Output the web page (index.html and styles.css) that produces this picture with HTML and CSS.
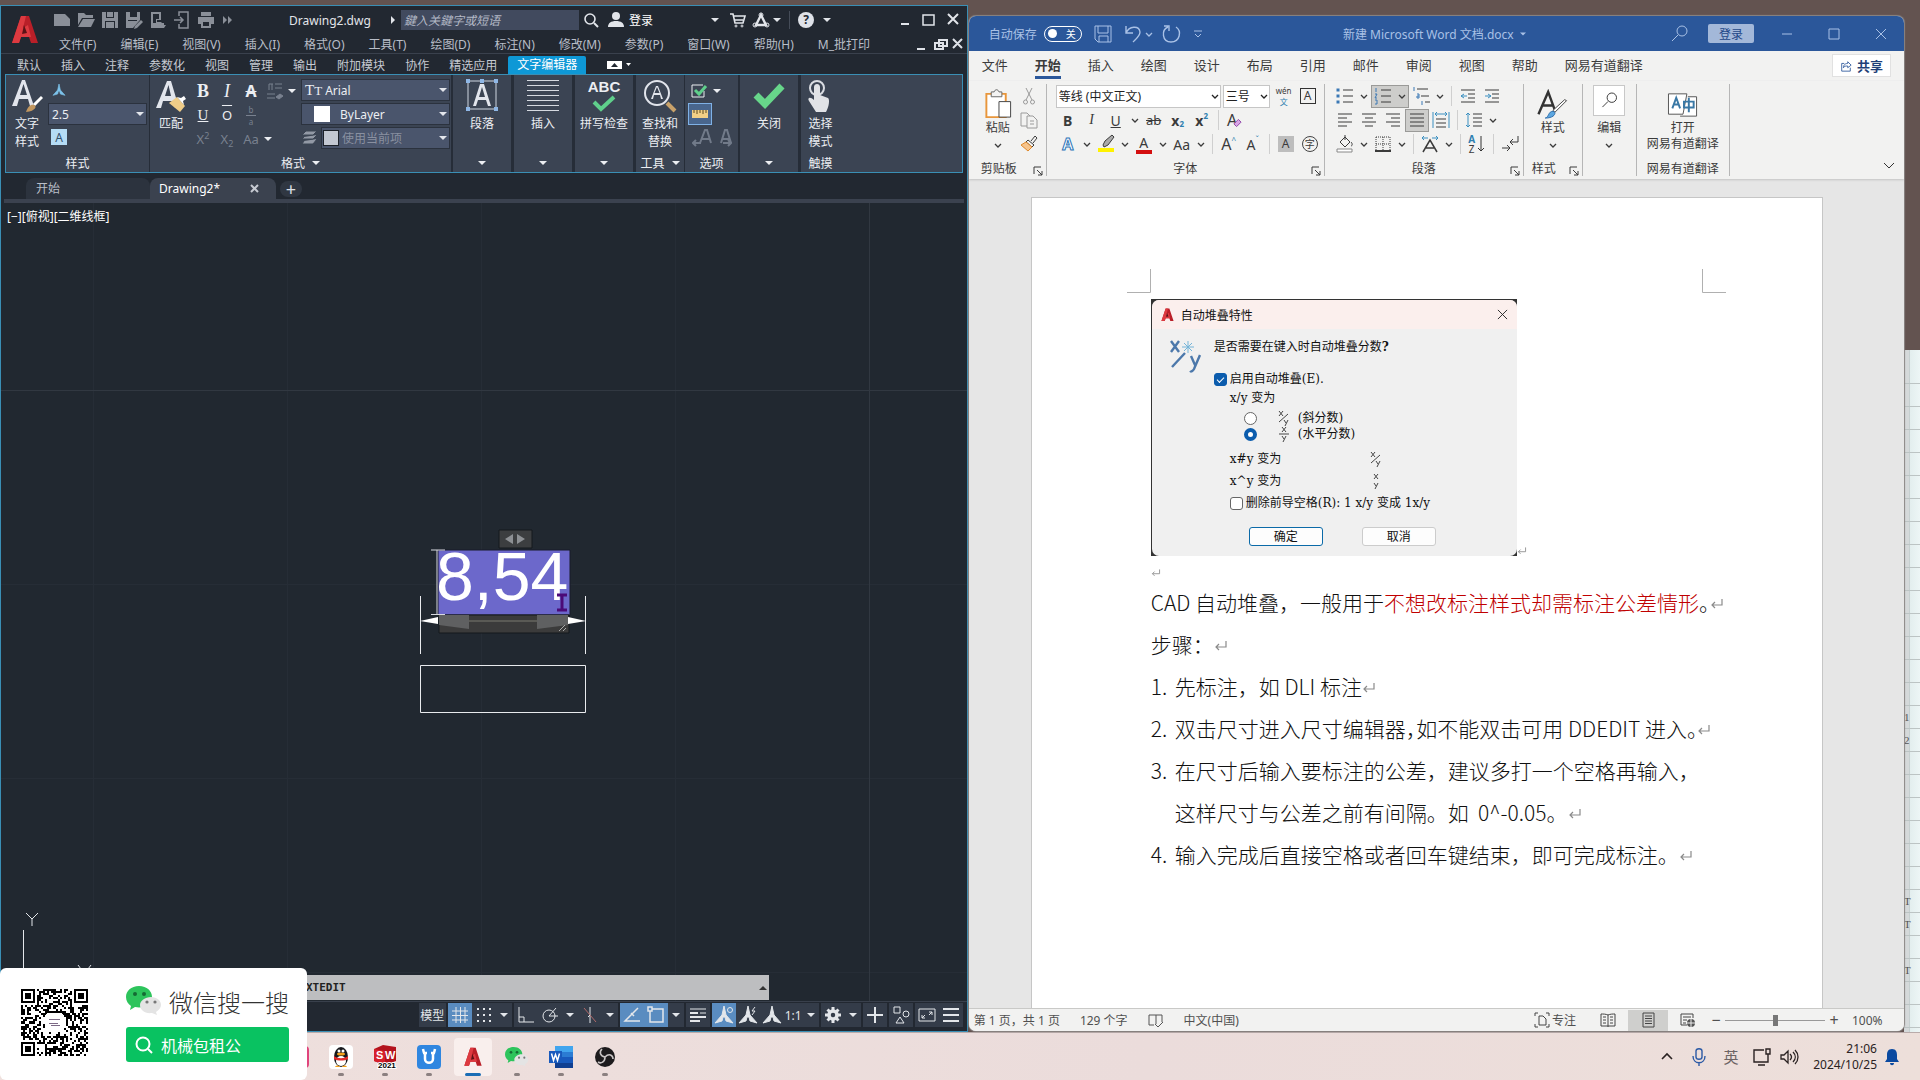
FILE: index.html
```html
<!DOCTYPE html>
<html lang="zh-CN">
<head>
  <meta charset="UTF-8" />
  <meta name="viewport" content="width=device-width, initial-scale=1.0"/>
  <title>Drawing2.dwg</title>
  <link rel="stylesheet" href="styles.css">
</head>
<body>
  <svg width="0" height="0" class="defs">
    <symbol id="acad" viewBox="0 0 26 30">
      <path d="M9 1h8l9 27h-7l-2-6H9l-2 6H0z" fill="#b91f28"/>
      <path d="M9 1h5l-3 12 5-3 3 12H9l-2 6H0z" fill="#dd3a40"/>
      <path d="M12 10l3 8-5 1z" fill="#5b1216"/>
    </symbol>
    <symbol id="chev" viewBox="0 0 8 8"><path d="M1 3l3 3 3-3" fill="none" stroke="currentColor" stroke-width="1.3"/></symbol>
    <symbol id="tri" viewBox="0 0 8 8"><path d="M0 2h8L4 6z" fill="currentColor"/></symbol>
    <symbol id="launch" viewBox="0 0 10 10"><path d="M1 8V1h7M4 4l5 5M9 5v4H5" fill="none" stroke="currentColor"/></symbol>
    <symbol id="wechat" viewBox="0 0 36 30">
      <path d="M13 0C5 0 0 5 0 11c0 4 2 7 5 9l-1 4 5-3c9 2 17-3 17-10C26 5 21 0 13 0z" fill="#2dc45c"/>
      <circle cx="9" cy="8" r="2" fill="#156b34"/><circle cx="18" cy="8" r="2" fill="#156b34"/>
      <path d="M25 11c-6 0-11 4-11 8 0 5 5 9 12 8l5 2-1-3c9-5 5-15-5-15z" fill="#e4e4e4"/>
      <circle cx="21" cy="16" r="1.6" fill="#777"/><circle cx="29" cy="16" r="1.6" fill="#777"/>
    </symbol>
    <symbol id="lines" viewBox="0 0 24 24"><path d="M5 6h14M5 10h14M5 14h14M5 18h14"/></symbol>
    <symbol id="para" viewBox="0 0 14 14"><path d="M12 2v6H2M5 5L2 8l3 3" fill="none" stroke="#8a8a8a" stroke-width="1.2"/></symbol>
    <symbol id="frac" viewBox="0 0 12 16"><path d="M1 1l4 5M5 1L1 6M1 12L10 4M6 10l2 3M10 10l-3 6" fill="none" stroke="#444"/></symbol>
    <symbol id="compass" viewBox="0 0 24 24"><path d="M12 3l2 9 7 8-7-2-1-4h-2l-1 4-7 2 7-8z" fill="currentColor" stroke="currentColor"/></symbol>
  </svg>

  <main class="desktop">
    <!-- AutoCAD -->
    <section class="cad">
      <header class="cad-head">
        <svg class="cad-logo"><use href="#acad"/></svg>
        <div class="cad-rows">
          <div class="cad-title">
            <div class="quick">
              <button aria-label="新建"><svg viewBox="0 0 24 24" class="i solid"><path d="M4 6h11l5 5v7H4z"/></svg></button>
              <button aria-label="打开"><svg viewBox="0 0 24 24" class="i solid"><path d="M4 5h6l2 2h7v3H8l-4 7zM9 11h12l-4 8H4z"/></svg></button>
              <button aria-label="保存"><svg viewBox="0 0 24 24" class="i solid"><path d="M4 4h16v16H4zM8 4v6h8V4h-1v5H9V4zM7 13v7h1v-6h8v6h1v-7z" fill-rule="evenodd"/></svg></button>
              <button aria-label="另存为"><svg viewBox="0 0 24 24" class="i solid"><path d="M4 4h14v8l-7 8H4zM8 4v5h7V4zM6 12v1h9v-1z" fill-rule="evenodd"/><path d="M19 12l2 2-6 6-3 1 1-3z"/></svg></button>
              <button aria-label="移动打开"><svg viewBox="0 0 24 24" class="i solid"><path d="M5 4h10v8h-4v8H5zM7 6v9h3v-4h3V6z" fill-rule="evenodd"/><path d="M11 14h4l1 1h2v2h2l-2 3h-7z"/></svg></button>
              <button aria-label="移动保存"><svg viewBox="0 0 24 24" class="i"><path d="M9 8V4h9v16H9v-4M4 12h9M10 9l3 3-3 3" stroke-width="1.500"/></svg></button>
              <button aria-label="打印"><svg viewBox="0 0 24 24" class="i solid"><path d="M7 4h10v4H7zM4 9h16v7h-3v4H7v-4H4zM9 14v4h6v-4z" fill-rule="evenodd"/></svg></button>
              <button aria-label="更多"><svg viewBox="0 0 24 24" class="i solid"><path d="M5 8l4 4-4 4zM10 8l4 4-4 4z"/></svg></button>
            </div>
            <h1>Drawing2.dwg</h1>
            <svg class="play" viewBox="0 0 6 8"><path d="M1 0l4 4-4 4z" fill="#e2e5ea"/></svg>
            <input class="cad-search" aria-label="搜索" placeholder="鍵入关鍵字或短语">
            <div class="cad-user">
              <svg viewBox="0 0 24 24" class="i"><circle cx="11" cy="11" r="5" stroke-width="1.6"/><path d="M15 15l4 4" stroke-width="2"/></svg>
              <svg viewBox="0 0 24 24" class="i solid"><circle cx="12" cy="8" r="4"/><path d="M4 19c0-4 3-6 8-6s8 2 8 6z"/></svg>
              <a href="#">登录</a>
            </div>
            <div class="cad-tools">
              <svg class="tri first"><use href="#tri"/></svg>
              <svg viewBox="0 0 24 24" class="i"><path d="M5 6h3l2 9h8l2-7H9M9 12h9" stroke-width="1.6"/><circle cx="11" cy="18" r="1"/><circle cx="17" cy="18" r="1"/></svg>
              <svg viewBox="0 0 24 24" class="i"><path d="M12 7L7 17h10z" stroke-width="2.4"/><circle cx="12" cy="7" r="2"/><circle cx="6" cy="17" r="2"/><circle cx="18" cy="17" r="2"/></svg>
              <svg class="tri"><use href="#tri"/></svg>
              <i class="bar"></i>
              <span class="help">?</span>
              <svg class="tri"><use href="#tri"/></svg>
            </div>
            <div class="winbtns">
              <button aria-label="最小化"><svg viewBox="0 0 24 24" class="i"><path d="M8 16h8" stroke-width="2"/></svg></button>
              <button aria-label="最大化"><svg viewBox="0 0 24 24" class="i"><path d="M6 7h11v10H6z" stroke-width="1.500"/></svg></button>
              <button aria-label="关闭"><svg viewBox="0 0 24 24" class="i"><path d="M7 6l10 10M17 6L7 16" stroke-width="2"/></svg></button>
            </div>
          </div>
          <nav class="cad-menu">
            <a href="#">文件(F)</a><a href="#">编辑(E)</a><a href="#">视图(V)</a><a href="#">插入(I)</a><a href="#">格式(O)</a><a href="#">工具(T)</a><a href="#">绘图(D)</a><a href="#">标注(N)</a><a href="#">修改(M)</a><a href="#">参数(P)</a><a href="#">窗口(W)</a><a href="#">帮助(H)</a><a href="#">M_批打印</a>
            <svg class="mdi" viewBox="0 0 54 18"><path d="M5 14h8M27 5h8v6h-8zM23 8h8v6h-8zM41 4l9 9M50 4l-9 9" fill="none" stroke="#dfe2e8" stroke-width="2"/></svg>
          </nav>
        </div>
      </header>
      <nav class="cad-tabs">
        <a href="#">默认</a><a href="#">插入</a><a href="#">注释</a><a href="#">参数化</a><a href="#">视图</a><a href="#">管理</a><a href="#">输出</a><a href="#">附加模块</a><a href="#">协作</a><a href="#">精选应用</a><a href="#" class="on">文字编辑器</a>
        <svg class="tabmin" viewBox="0 0 26 10"><path d="M0 1h15v8H0z" fill="#fff"/><path d="M4 7h7L7.500 3z" fill="#222831"/><path d="M19 3h5l-2.500 3z" fill="#fff"/></svg>
      </nav>

      <div class="cad-ribbon">
        <div class="panel p-style">
          <div class="panel-body">
            <button class="big"><svg viewBox="0 0 32 34"><path d="M1 27L11 1h3l9 26h-4l-2-7H8l-2 7zM9 16h7L12.500 5z" fill="#e2e5ec"/><path d="M31 18l-8 8" stroke="#fff" stroke-width="3"/><path d="M15 33c2-6 5-8 8-7s2 6-8 7z" fill="#c2975f"/></svg><span>文字<br>样式</span></button>
            <div class="stack">
              <svg class="anno" viewBox="0 0 24 24"><use href="#compass"/></svg>
              <span class="combo"><select aria-label="文字高度"><option>2.5</option></select></span>
              <button class="abox" aria-label="遮罩">A</button>
            </div>
          </div>
          <div class="panel-foot">样式</div>
        </div>
        <div class="panel p-format">
          <div class="panel-body">
            <button class="big match"><svg viewBox="0 0 32 34"><path d="M1 29L12 2h4l8 27h-4l-2-7H8l-2 7zM10 17h6L13.500 6z" fill="#e2e5ec"/><path d="M14 24l8-6 8 9-5 6z" fill="#f0cd88"/><path d="M22 18l4 1 3-2 2 3-3 2 1 4z" fill="#fff"/></svg><span>匹配</span></button>
            <div class="fmt">
              <button class="serif b">B</button><button class="serif it">I</button><button class="blue strike">A</button><button class="dim" aria-label="段落清除"><svg viewBox="0 0 24 24" class="i"><path d="M6 5h4M6 5v6M9 5v6M12 5h7M12 9h7M4 15h8M4 19h8" /><path d="M13 18l4-3 3 2-4 3z" fill="currentColor"/></svg></button><svg class="tri"><use href="#tri"/></svg>
              <button class="serif under">U</button><button class="over">O</button><button class="dim fracbtn"><span>b</span><span>a</span></button><i></i><i></i>
              <button class="dim">X<sup>2</sup></button><button class="dim">X<sub>2</sub></button><button class="dim">Aa</button><svg class="tri"><use href="#tri"/></svg><i></i>
            </div>
            <div class="combos">
              <span class="combo"><b class="tt">T<small>T</small></b><select aria-label="字体"><option>Arial</option></select></span>
              <span class="combo"><b class="swatch"></b><select class="ml" aria-label="颜色"><option>ByLayer</option></select></span>
              <div class="layerrow">
                <svg viewBox="0 0 18 16"><path d="M5 1h11l-4 4H1zM3 7l-2 2h11l4-4M3 11l-2 3h11l4-5" fill="#9299a5" stroke="#3b4453"/></svg>
                <span class="combo off"><b class="swatch grey"></b><select disabled aria-label="图层"><option>使用当前项</option></select></span>
              </div>
            </div>
          </div>
          <div class="panel-foot">格式<svg class="tri"><use href="#tri"/></svg></div>
        </div>
        <div class="panel p-one">
          <button class="big"><svg viewBox="0 0 32 34"><path d="M2 2h28v28H2z" fill="none" stroke="#cfd6e2"/><path d="M7 27L14 5h4l7 22h-3l-2-6h-8l-2 6zM13 18h6l-3-10z" fill="#e2e5ec"/><path d="M0 0h4v4H0zM14 0h4v4h-4zM28 0h4v4h-4zM0 28h4v4H0zM28 28h4v4h-4z" fill="#8fb7e6"/></svg><span>段落</span></button>
          <div class="panel-foot"><svg class="tri"><use href="#tri"/></svg></div>
        </div>
        <div class="panel p-one">
          <button class="big"><svg viewBox="0 0 32 34"><path d="M0 1.500h32M0 6.500h32M0 11.500h32M0 16.500h32M0 21.500h32M0 26.500h32M0 31.500h32" stroke="#d5d9e0"/></svg><span>插入</span></button>
          <div class="panel-foot"><svg class="tri"><use href="#tri"/></svg></div>
        </div>
        <div class="panel p-one">
          <button class="big"><b class="abc">ABC</b><svg class="tick" viewBox="0 0 24 18"><path d="M2 8l7 7L22 3" fill="none" stroke="#5fcf8b" stroke-width="4"/></svg><span>拼写检查</span></button>
          <div class="panel-foot"><svg class="tri"><use href="#tri"/></svg></div>
        </div>
        <div class="panel p-find">
          <button class="big"><svg viewBox="0 0 34 34"><circle cx="14" cy="14" r="12" fill="none" stroke="#e2e5ec" stroke-width="2"/><path d="M8 20l5-13h2l5 13h-2l-1-4h-6l-1 4zM11.500 14h5L14 8z" fill="#e2e5ec"/><path d="M24 24l8 8" stroke="#c9a26a" stroke-width="4"/></svg><span>查找和<br>替换</span></button>
          <div class="panel-foot">工具<svg class="tri"><use href="#tri"/></svg></div>
        </div>
        <div class="panel p-opt">
          <div class="opts">
            <div><svg viewBox="0 0 24 24" class="i"><path d="M16 6H5v12h12v-6"/><path d="M8 11l4 4 7-8" stroke="#5fcf8b" stroke-width="3"/></svg><svg class="tri"><use href="#tri"/></svg></div>
            <button class="ruler" aria-label="标尺"><svg viewBox="0 0 16 8"><path d="M0 0h16v8H0z" fill="#f1cf86"/><path d="M2 0v3M5 0v4M8 0v3M11 0v4M14 0v3" stroke="#5b4a20"/></svg></button>
            <svg class="undo" viewBox="0 0 40 18"><path d="M8 14L13 1h2l4 13M10 10h7M29 14l4-13h2l4 13M30 10h7" fill="none" stroke="currentColor" stroke-width="2"/><path d="M1 14h8M4 11l-3 3 3 3M31 14h8M36 11l3 3-3 3" fill="none" stroke="currentColor" stroke-width="2"/></svg>
          </div>
          <div class="panel-foot">选项</div>
        </div>
        <div class="panel p-one">
          <button class="big"><svg viewBox="0 0 32 34"><path d="M3 16l9 9L29 7" fill="none" stroke="#67d68a" stroke-width="7"/></svg><span>关闭</span></button>
          <div class="panel-foot"><svg class="tri"><use href="#tri"/></svg></div>
        </div>
        <div class="panel p-touch">
          <button class="big"><svg viewBox="0 0 32 34"><circle cx="12" cy="9" r="7" fill="none" stroke="#d9dce2" stroke-width="2"/><path d="M9 8c0-4 6-4 6 0v8l8 3c2 1 1 9-2 14H11L4 22c-2-3 1-5 5-1z" fill="#e0e2e6"/></svg><span>选择<br>模式</span></button>
          <div class="panel-foot">触摸</div>
        </div>
      </div>

      <div class="filetabs">
        <a href="#" class="ft">开始</a>
        <a href="#" class="ft on">Drawing2*<svg viewBox="0 0 10 10"><path d="M1 1l7 7M8 1L1 8" stroke="#c6cad2" stroke-width="2"/></svg></a>
        <button class="plus" aria-label="新图形">+</button>
      </div>

      <div class="canvas">
        <div class="viewname">[−][俯视][二维线框]</div>
        <svg class="dim-edit" viewBox="0 0 220 220">
          <path d="M99 20h33v18H99z" fill="#3c3e40" stroke="#15191d"/>
          <path d="M105 29l8-5v10zM125 29l-8-5v10z" fill="#8d9094"/>
          <path d="M38 40h132v65H38z" fill="#6c68cb" stroke="#191b2b"/>
          <path d="M39 105h130v18H39z" fill="#3b3b3b" stroke="#15191d"/>
          <path d="M39 105h30v14l-30-4zM137 105h31v10l-31 4z" fill="#5f6061"/>
          <path d="M69 111h68" stroke="#7a7a70"/>
          <path d="M159 121l6-6M163 121l3-3" stroke="#aaa"/>
          <path d="M31 40h14M37 40v64M31 104.500h14" stroke="#d8dae0" fill="none"/>
          <text x="36" y="90">8,54</text>
          <path d="M157 85h10M162 85v15M157 100h10" stroke="#4b0a78" stroke-width="3" fill="none"/>
          <path d="M20.500 86v58M185.500 86v58M20.500 155.500h165v47h-165z" stroke="#e9ebee" fill="none"/>
          <path d="M20 111l18-4v7zM186 111l-18-4v7z" fill="#fff"/>
        </svg>
        <svg class="ucs" viewBox="0 0 100 90"><path d="M25 2l6 6v7M37 2l-6 6M22.500 19v71M77 54l12 16M90 54L78 70" fill="none" stroke="#e3e6ea"/></svg>
        <div class="cmd"><input aria-label="命令行" value="XTEDIT"><svg class="tri"><use href="#tri"/></svg></div>
      </div>

      <footer class="cad-status">
        <div class="sg"><button class="model">模型</button></div>
        <div class="sg">
          <button class="sel"><svg viewBox="0 0 24 24" class="i"><path d="M8 4v16M12.500 4v16M17 4v16M4 8h16M4 12.500h16M4 17h16"/></svg></button>
          <button><svg viewBox="0 0 24 24" class="i"><path d="M5 6h14M5 12h14M5 18h14" stroke-width="2" stroke-dasharray="2 4"/></svg></button><svg class="tri"><use href="#tri"/></svg>
        </div>
        <div class="sg">
          <button><svg viewBox="0 0 24 24" class="i"><path d="M5 4v15h15M5 14h5v5"/></svg></button>
          <button><svg viewBox="0 0 24 24" class="i"><circle cx="11" cy="13" r="6"/><path d="M11 13l7-8M11 13h9"/></svg></button><svg class="tri"><use href="#tri"/></svg>
          <button><svg viewBox="0 0 24 24" class="i"><path d="M12 4v16"/><path d="M6 5l12 14" stroke="#b06a6a"/><path d="M12 12l-2 2"/></svg></button><svg class="tri"><use href="#tri"/></svg>
        </div>
        <div class="sg">
          <button class="sel"><svg viewBox="0 0 24 24" class="i"><path d="M18 5L5 18h15M11 10l3 3" stroke-width="1.500"/></svg></button>
          <button class="sel"><svg viewBox="0 0 24 24" class="i"><path d="M4 4h4v4H4zM8 6h11v13H6V8" stroke-width="1.500"/></svg></button><svg class="tri"><use href="#tri"/></svg>
        </div>
        <div class="sg"><button><svg viewBox="0 0 24 24" class="i"><path d="M4 6h16" stroke-width="1"/><path d="M4 10h8M4 14h16M4 18h10" stroke-width="2"/><path d="M14 10h6"/></svg></button></div>
        <div class="sg">
          <button class="sel"><svg viewBox="0 0 24 24" class="i"><use href="#compass"/><circle cx="18" cy="7" r="2.500"/></svg></button>
          <button><svg viewBox="0 0 24 24" class="i"><use href="#compass"/><path d="M19 4l-3 4h3l-3 4"/></svg></button>
          <button><svg viewBox="0 0 24 24" class="i"><use href="#compass"/></svg></button>
          <button class="scale">1:1</button><svg class="tri"><use href="#tri"/></svg>
        </div>
        <div class="sg"><button><svg viewBox="0 0 24 24" class="i"><circle cx="12" cy="12" r="4" stroke-width="3.500"/><path d="M12 4v3M12 17v3M4 12h3M17 12h3M6.500 6.500l2 2M15.500 15.500l2 2M17.500 6.500l-2 2M8.500 15.500l-2 2" stroke-width="3"/></svg></button><svg class="tri"><use href="#tri"/></svg></div>
        <div class="sg"><button><svg viewBox="0 0 24 24" class="i"><path d="M12 4v16M4 12h16" stroke-width="2"/></svg></button></div>
        <div class="sg"><button><svg viewBox="0 0 24 24" class="i"><path d="M5 4h6v6H5zM11 14l4 6H7z"/><circle cx="17" cy="11" r="3"/></svg></button></div>
        <div class="sg">
          <button><svg viewBox="0 0 24 24" class="i"><path d="M4 6h16v12H4zM7 15l3-3M7 12v3h3M17 9l-3 3M17 12V9h-3"/></svg></button>
          <button><svg viewBox="0 0 24 24" class="i"><path d="M4 6h16M4 12h16M4 18h16" stroke-width="2"/></svg></button>
        </div>
      </footer>
    </section>

    <!-- Word -->
    <section class="word">
      <header class="w-title">
        <div class="w-left">
          <label for="autosave">自动保存</label>
          <span class="switch"><input type="checkbox" id="autosave"><span>关</span></span>
          <button aria-label="保存"><svg viewBox="0 0 24 24" class="i"><path d="M4 4h16v16H7l-3-3zM7 4v7h10V4M8 20v-6h9v6"/></svg></button>
          <button aria-label="撤消"><svg viewBox="0 0 24 24" class="i"><path d="M5 4v7h7M5 11c3-7 13-8 14-1 0 4-4 7-7 10" stroke-width="1.400"/></svg></button>
          <svg class="chev"><use href="#chev"/></svg>
          <button aria-label="重做"><svg viewBox="0 0 24 24" class="i"><path d="M5 4h5v5M9 5c-7 3-6 15 3 15s11-11 5-15" stroke-width="1.400"/></svg></button>
          <svg class="more" viewBox="0 0 10 10"><path d="M1 2h8M2 5l3 3 3-3" fill="none" stroke="currentColor"/></svg>
        </div>
        <h2>新建 Microsoft Word 文档.docx <svg class="tri"><use href="#tri"/></svg></h2>
        <div class="w-right">
          <button aria-label="搜索"><svg viewBox="0 0 24 24" class="i"><circle cx="14" cy="9" r="5"/><path d="M10 13l-6 6"/></svg></button>
          <button class="signin">登录</button>
          <button class="wb" aria-label="最小化"><svg viewBox="0 0 24 24" class="i"><path d="M7 12h10"/></svg></button>
          <button class="wb" aria-label="还原"><svg viewBox="0 0 24 24" class="i"><path d="M7 7h10v10H7z"/></svg></button>
          <button class="wb" aria-label="关闭"><svg viewBox="0 0 24 24" class="i"><path d="M7 7l10 10M17 7L7 17"/></svg></button>
        </div>
      </header>
      <nav class="w-tabs">
        <a href="#">文件</a><a href="#" class="on">开始</a><a href="#">插入</a><a href="#">绘图</a><a href="#">设计</a><a href="#">布局</a><a href="#">引用</a><a href="#">邮件</a><a href="#">审阅</a><a href="#">视图</a><a href="#">帮助</a><a href="#">网易有道翻译</a>
        <button class="share"><svg viewBox="0 0 14 14"><path d="M5 4H2v9h10V9M4 9c0-4 3-5 5-5V2l4 4-4 3V7C7 7 5 7 4 9z" fill="none" stroke="#2b579a"/></svg>共享</button>
      </nav>

      <div class="w-ribbon">
        <div class="grp g-clip">
          <div class="g-body">
            <button class="tall"><svg viewBox="0 0 28 32"><path d="M2 5h20v24H2z" fill="#fff" stroke="#e8963c" stroke-width="2"/><path d="M7 3h3c1-3 4-3 5 0h3v5H7z" fill="#f3f3f3" stroke="#666"/><path d="M15 13h12v16H15z" fill="#fff" stroke="#444"/></svg>粘贴<svg class="chev"><use href="#chev"/></svg></button>
            <div class="col">
              <button><svg viewBox="0 0 24 24" class="i grey"><path d="M9 4l6 12M15 4L9 16"/><circle cx="8.500" cy="18" r="2"/><circle cx="15.500" cy="18" r="2"/></svg></button>
              <button><svg viewBox="0 0 24 24" class="i grey"><path d="M10 18H4V5h6l3 3M10 8h6l4 4v8H10zM13 13h4M13 16h4"/></svg></button>
              <button><svg viewBox="0 0 24 24" class="i"><path d="M14 9l4-5 2 2-4 5M11 8l6 5-2 2-6-5z"/><path d="M9 10l6 5-4 4-7-6z" fill="#f7c58d" stroke="#e08a2c"/></svg></button>
            </div>
          </div>
          <div class="g-foot">剪贴板<svg><use href="#launch"/></svg></div>
        </div>
        <div class="grp g-font">
          <div class="g-body rows">
            <div class="r">
              <span class="wsel face"><select aria-label="字体"><option>等线 (中文正文)</option></select><svg class="chev"><use href="#chev"/></svg></span>
              <span class="wsel size"><select aria-label="字号"><option>三号</option></select><svg class="chev"><use href="#chev"/></svg></span>
              <button class="wen"><small>wén</small><small>文</small></button>
              <button><span class="boxed">A</span></button>
            </div>
            <div class="r">
              <button class="b">B</button><button class="it">I</button><button class="under">U</button><svg class="chev"><use href="#chev"/></svg><button class="del">ab</button><button class="b">x<sub>2</sub></button><button class="b">x<sup>2</sup></button><i class="sep"></i><button><span class="a16">A</span><svg class="eraser" viewBox="0 0 10 10"><path d="M1 6l5-5 3 3-5 5z" fill="#d9a5e6" stroke="#8b3fa5"/></svg></button>
            </div>
            <div class="r">
              <button class="fx">A</button><svg class="chev"><use href="#chev"/></svg>
              <button><svg viewBox="0 0 24 24" class="i"><path d="M18 3l2 2-6 8-4 2-1-2 2-4z" fill="#aaa"/><path d="M4 18h16" stroke="#fff200" stroke-width="4"/></svg></button><svg class="chev"><use href="#chev"/></svg>
              <button class="red">A</button><svg class="chev"><use href="#chev"/></svg>
              <button class="aa">Aa</button><svg class="chev"><use href="#chev"/></svg><i class="sep"></i>
              <button class="a16">A<sup>^</sup></button><button>A<sup>ˇ</sup></button><i class="sep"></i>
              <button><span class="shade">A</span></button><button><span class="ring">字</span></button>
            </div>
          </div>
          <div class="g-foot">字体<svg><use href="#launch"/></svg></div>
        </div>
        <div class="grp g-para">
          <div class="g-body rows">
            <div class="r">
              <button><svg viewBox="0 0 24 24" class="i"><path d="M10 6h10M10 12h10M10 18h10"/><path d="M5 4.500v3M5 10.500v3M5 16.500v3" stroke="#3a78b5" stroke-width="3"/></svg></button><svg class="chev"><use href="#chev"/></svg>
              <span class="pressed"><button><svg viewBox="0 0 24 24" class="i"><path d="M10 6h10M10 12h10M10 18h10"/><path d="M5 4v4M4 10h2l-2 4h2M4 16h2v4H4" stroke="#3a78b5"/></svg></button><svg class="chev"><use href="#chev"/></svg></span>
              <button><svg viewBox="0 0 24 24" class="i"><path d="M8 5h11M12 12h8M16 18h5"/><path d="M5 3v4M8 10h2v4H8v-2h2M13 17v4" stroke="#3a78b5"/></svg></button><svg class="chev"><use href="#chev"/></svg><i class="sep"></i>
              <button><svg viewBox="0 0 24 24" class="i"><path d="M5 6h14M12 10h7M12 14h7M5 18h14"/><path d="M5 12h6M8 10l-3 2 3 2" stroke="#3a8fc0"/></svg></button>
              <button><svg viewBox="0 0 24 24" class="i"><path d="M5 6h14M12 10h7M12 14h7M5 18h14"/><path d="M5 12h6M8 10l3 2-3 2" stroke="#3a8fc0"/></svg></button>
            </div>
            <div class="r">
              <button><svg viewBox="0 0 24 24" class="i"><path d="M5 6h14M5 10h9M5 14h14M5 18h9"/></svg></button>
              <button><svg viewBox="0 0 24 24" class="i"><path d="M5 6h14M8 10h8M5 14h14M8 18h8"/></svg></button>
              <button><svg viewBox="0 0 24 24" class="i"><path d="M5 6h14M10 10h9M5 14h14M10 18h9"/></svg></button>
              <span class="pressed"><button><svg class="i"><use href="#lines"/></svg></button></span>
              <button><svg viewBox="0 0 24 24" class="i"><path d="M7 11h10M7 15h10M7 19h10"/><path d="M4 4v16M20 4v16M6 6h12M8 4L6 6l2 2M16 4l2 2-2 2" stroke="#3a8fc0"/></svg></button><i class="sep"></i>
              <button><svg viewBox="0 0 24 24" class="i"><path d="M11 6h9M11 10h9M11 14h9M11 18h9"/><path d="M6 5v14M4 7l2-2 2 2M4 17l2 2 2-2" stroke="#3a8fc0"/></svg></button><svg class="chev"><use href="#chev"/></svg>
            </div>
            <div class="r">
              <button><svg viewBox="0 0 24 24" class="i"><path d="M12 5l5 5-5 5-5-5zM12 3v5M18 10c2 2 1 4 0 4"/><path d="M4 17h15v3H4z" fill="#fff" stroke="#888"/></svg></button><svg class="chev"><use href="#chev"/></svg>
              <button><svg viewBox="0 0 24 24" class="i"><path d="M5 5h14v13M5 5v13M12 5v13M5 12h14" stroke-dasharray="1 1"/><path d="M4 19h16" stroke-width="2"/></svg></button><svg class="chev"><use href="#chev"/></svg><i class="sep"></i>
              <button><svg viewBox="0 0 24 24" class="i"><path d="M5 20L12 8l7 12M8 16h8" stroke-width="1.500"/><path d="M4 6h6M6 4L4 6l2 2M14 6h6M18 4l2 2-2 2" stroke="#3a8fc0"/></svg></button><svg class="chev"><use href="#chev"/></svg><i class="sep"></i>
              <button class="az"><span>A</span><span>Z</span><svg viewBox="0 0 8 18"><path d="M4 1v15M1 13l3 3 3-3" fill="none" stroke="#333"/></svg></button><i class="sep"></i>
              <button><svg viewBox="0 0 24 24" class="i"><path d="M20 4v6h-7M15 7l-3 3 3 3M4 16h8M9 13l3 3-3 3"/></svg></button>
            </div>
          </div>
          <div class="g-foot">段落<svg><use href="#launch"/></svg></div>
        </div>
        <div class="grp g-style">
          <div class="g-body">
            <button class="tall"><svg viewBox="0 0 32 32"><path d="M1 26L11 3l7 19M5 17h11" fill="none" stroke="#333" stroke-width="2.500"/><path d="M30 12L18 24l-2-2 12-11z" fill="#fff" stroke="#444"/><path d="M8 30c4-1 3-7 8-7 4 1 2 7-8 7z" fill="#5da7e0" stroke="#2b6cab"/></svg>样式<svg class="chev"><use href="#chev"/></svg></button>
          </div>
          <div class="g-foot">样式<svg><use href="#launch"/></svg></div>
        </div>
        <div class="grp g-edit">
          <div class="g-body"><button class="tall"><svg class="findbox" viewBox="0 0 32 30"><circle cx="19" cy="12" r="5" fill="none" stroke="#333"/><path d="M15 16l-6 6" stroke="#333"/></svg>编辑<svg class="chev"><use href="#chev"/></svg></button></div>
          <div class="g-foot"></div>
        </div>
        <div class="grp g-youdao">
          <div class="g-body"><button class="tall"><svg viewBox="0 0 32 32"><path d="M1 5h19l-4 21H1zM21 8h9v20H13" fill="#fff" stroke="#555"/><path d="M5 20L9 9l4 11M6 16h6M17 13h10v6H17zM22 9v15" fill="none" stroke="#3a78a5" stroke-width="2"/></svg>打开<span>网易有道翻译</span></button></div>
          <div class="g-foot">网易有道翻译</div>
        </div>
        <button class="collapse" aria-label="折叠功能区"><svg viewBox="0 0 12 8"><path d="M1 1l5 5 5-5" fill="none" stroke="#333"/></svg></button>
      </div>

      <div class="w-doc">
        <article class="page">
          <svg class="crop tl" viewBox="0 0 24 24"><path d="M23.500 0v23.500H0"/></svg>
          <svg class="crop tr" viewBox="0 0 24 24"><path d="M.5 0v23.500H24"/></svg>
          <div class="figure">
            <div class="shot">
              <div class="dlg">
                <div class="dlg-title"><svg><use href="#acad"/></svg>自动堆叠特性<svg class="x" viewBox="0 0 12 12"><path d="M1 1l10 10M11 1L1 11" stroke="#222"/></svg></div>
                <div class="dlg-body">
                  <svg class="xy" viewBox="0 0 32 34"><path d="M2 2l8 11M10 2L2 13M3 28L16 14M22 17l4 9M31 16l-6 14c-1 2-3 3-4 2" fill="none" stroke="#4c78ab" stroke-width="2.400"/><path d="M19 2v12M13 8h12M15 4l8 8M23 4l-8 8" stroke="#74b4d8"/></svg>
                  <p class="ask">是否需要在键入时自动堆叠分数<b>?</b></p>
                  <div class="dr d1"><input type="checkbox" id="stack" checked><label for="stack">启用自动堆叠(E).</label></div>
                  <div class="dr d2">x/y 变为</div>
                  <div class="dr d3"><input type="radio" name="f" id="f1"><svg class="frac"><use href="#frac"/></svg><label for="f1">(斜分数)</label></div>
                  <div class="dr d3"><input type="radio" name="f" id="f2" checked><svg class="frac" viewBox="0 0 12 16"><path d="M4 1l4 5M8 1L4 6M1 8h10M4 10l2 3M8 10l-3 6" fill="none" stroke="#444"/></svg><label for="f2">(水平分数)</label></div>
                  <div class="dr d4"><span>x#y 变为</span><svg class="frac"><use href="#frac"/></svg></div>
                  <div class="dr d4"><span>x^y 变为</span><svg class="frac" viewBox="0 0 12 16"><path d="M4 1l4 5M8 1L4 6M4 10l2 3M8 10l-3 6" fill="none" stroke="#444"/></svg></div>
                  <div class="dr d5"><input type="checkbox" id="lead"><label for="lead">删除前导空格(R): 1 x/y 变成 1x/y</label></div>
                  <div class="btns"><button class="ok">确定</button><button>取消</button></div>
                </div>
              </div>
            </div>
            <svg class="pm"><use href="#para"/></svg>
          </div>
          <p class="blank"><svg class="pm"><use href="#para"/></svg></p>
          <p>CAD 自动堆叠，一般用于<span class="hot">不想改标注样式却需标注公差情形</span><span class="half">。</span><svg class="pm"><use href="#para"/></svg></p>
          <p>步骤：<svg class="pm"><use href="#para"/></svg></p>
          <ol>
            <li><b>1.</b><span>先标注，如 DLI 标注<svg class="pm"><use href="#para"/></svg></span></li>
            <li><b>2.</b><span>双击尺寸进入尺寸编辑器<span class="half">，</span>如不能双击可用 DDEDIT 进入<span class="half">。</span><svg class="pm"><use href="#para"/></svg></span></li>
            <li><b>3.</b><span>在尺寸后输入要标注的公差，建议多打一个空格再输入，<br>这样尺寸与公差之前有间隔。如 &nbsp;0^-0.05。<svg class="pm"><use href="#para"/></svg></span></li>
            <li><b>4.</b><span>输入完成后直接空格或者回车键结束，即可完成标注。<svg class="pm"><use href="#para"/></svg></span></li>
          </ol>
        </article>
      </div>

      <footer class="w-status">
        <span>第 1 页，共 1 页</span>
        <span>129 个字</span>
        <svg class="book" viewBox="0 0 16 14"><path d="M8 2v9M8 2H1v10h5M8 2h6v7M7 11l3 3 5-5" fill="none" stroke="#555"/></svg>
        <span>中文(中国)</span>
        <div class="w-views">
          <button class="focus"><svg viewBox="0 0 16 16"><path d="M4 1H1v3M12 1h3v3M4 15H1v-3M12 15h3v-3M5 4h4l3 3v6H5z" fill="none" stroke="#444"/></svg>专注</button>
          <button class="view"><svg viewBox="0 0 16 16"><path d="M8 3v12M8 3C6 2 3 2 1 2v12h7M8 3c2-1 5-1 7-1v12H8M3 5h3M3 8h3M3 11h3M10 5h3M10 8h3M10 11h3" fill="none" stroke="#444"/></svg></button>
          <button class="view on"><svg viewBox="0 0 16 16"><path d="M3 1h11v14H3zM5 4h7M5 6.500h7M5 9h7M5 11.500h7" fill="none" stroke="#444"/></svg></button>
          <button class="view"><svg viewBox="0 0 16 16"><path d="M7 13H1V2h12v4M3 5h8M3 8h4M3 11h3" fill="none" stroke="#444"/><circle cx="11" cy="11" r="4" fill="#555"/><path d="M7 11h8M11 7v8" stroke="#eee"/></svg></button>
          <button class="zb">−</button>
          <input type="range" min="0" max="100" value="50" aria-label="缩放">
          <button class="zb">+</button>
          <span class="pct">100%</span>
        </div>
      </footer>
    </section>
    <aside class="sheet"><ol id="sheetRows"></ol></aside>
  </main>

  <footer class="taskbar">
    <div class="apps">
      <button class="app peek" aria-label="应用"></button>
      <button class="app run" aria-label="QQ"><svg viewBox="0 0 24 24"><rect width="24" height="24" rx="4" fill="#fff"/><ellipse cx="12" cy="12" rx="7" ry="10" fill="#17181c"/><ellipse cx="12" cy="16" rx="5" ry="5" fill="#fff"/><path d="M5 11c4 3 10 3 14 0v3c-4 2-10 2-14 0z" fill="#e32b2b"/><ellipse cx="12" cy="9" rx="4" ry="1.500" fill="#f3a11b"/><circle cx="10" cy="6" r="1.500" fill="#fff"/><circle cx="14" cy="6" r="1.500" fill="#fff"/><path d="M6 22c1-2 4-2 5 0zM13 22c1-2 4-2 5 0z" fill="#f3a11b"/></svg></button>
      <button class="app run" aria-label="SolidWorks"><svg viewBox="0 0 24 24"><path d="M1 4l9-4 13 2v14l-11 4-11-4z" fill="#b3121d"/><path d="M1 4l11 2v14L1 16z" fill="#d6202b"/><text x="3" y="14" class="sw">S</text><text x="12" y="14" class="sw">W</text><text x="5" y="23" class="yr">2021</text></svg></button>
      <button class="app run" aria-label="U"><svg viewBox="0 0 24 24"><rect width="24" height="24" rx="4" fill="#2f86e0"/><path d="M8 8v6c0 5 8 5 8 0V8M6 8h4M14 8h4M7 8L6 4M17 8l1-4" fill="none" stroke="#fff" stroke-width="2.500"/></svg></button>
      <button class="app run active" aria-label="AutoCAD"><svg class="sm"><use href="#acad"/></svg></button>
      <button class="app run" aria-label="微信"><svg><use href="#wechat"/></svg></button>
      <button class="app run" aria-label="Word"><svg viewBox="0 0 24 24"><path d="M6 1h18v22H6z" fill="#2b7cd3"/><path d="M6 1h18v6H6z" fill="#41a5ee"/><path d="M6 12h18v6H6z" fill="#185abd"/><path d="M6 18h18v5H6z" fill="#103f91"/><path d="M0 6h13v12H0z" fill="#185abd"/><path d="M2.500 8.500l2 7 2-6 2 6 2-7" fill="none" stroke="#fff" stroke-width="1.500"/></svg></button>
      <button class="app run" aria-label="OBS"><svg viewBox="0 0 24 24"><circle cx="12" cy="12" r="10" fill="#1d1b1d"/><path d="M12 12c-5-1-6-5-3-8M12 12c4-4 8-2 8 2M12 12c0 5-4 7-7 5" fill="none" stroke="#c9c5c5" stroke-width="1.600"/></svg></button>
    </div>
    <div class="tray">
      <button class="tr"><svg viewBox="0 0 24 24" class="i"><path d="M7 14l5-5 5 5" stroke-width="1.600"/></svg></button>
      <button class="tr mic"><svg viewBox="0 0 24 24" class="i"><path d="M9 6c0-3 6-3 6 0v6c0 3-6 3-6 0zM6 11c0 9 12 9 12 0M12 17v4" stroke-width="1.400"/></svg></button>
      <button class="tr ime">英</button>
      <button class="tr"><svg viewBox="0 0 24 24" class="i"><path d="M14 5H4v12h14v-4M8 20h7M16 4h4v5h-4zM18 9v6" stroke-width="1.400"/></svg></button>
      <button class="tr"><svg viewBox="0 0 24 24" class="i"><path d="M4 10h3l4-4v12l-4-4H4zM13 9c2 2 2 4 0 6M16 7c3 3 3 7 0 10M18 5c4 4 4 10 0 14" stroke-width="1.300"/></svg></button>
      <div class="clock"><time>21:06</time><time>2024/10/25</time></div>
      <svg class="bell" viewBox="0 0 16 18"><path d="M8 1c4 0 5 3 5 6v4l2 3H1l2-3V7c0-3 1-6 5-6zM6 15h4c0 3-4 3-4 0z" fill="#0b4aa0"/></svg>
    </div>
  </footer>

  <div class="wx-card">
    <svg id="qr" viewBox="0 0 33 33" shape-rendering="crispEdges"></svg>
    <div class="wx-side">
      <div class="wx-name"><svg><use href="#wechat"/></svg>微信搜一搜</div>
      <button class="wx-search"><svg viewBox="0 0 18 18"><circle cx="8" cy="8" r="6.500"/><path d="M13 13l4 4"/></svg>机械包租公</button>
    </div>
  </div>

  <script>
    // rows of the sheet that sticks out behind Word
    const labels = { 15: '1', 16: '2', 23: 'T', 24: 'T', 26: 'T' };
    const rows = document.getElementById('sheetRows');
    for (let i = 0; i < 29; i++) {
      const li = document.createElement('li');
      li.textContent = labels[i] || '';
      rows.appendChild(li);
    }

    // QR code: three finders, the rest filled from a small generator
    const n = 33;
    let seed = 20241025;
    function bit() {
      seed = (seed * 1103515245 + 12345) % 2147483648;
      return seed > 1073741824;
    }
    function finder(x, y, fx, fy) {
      const dx = x - fx, dy = y - fy;
      if (dx < -1 || dy < -1 || dx > 7 || dy > 7) return null;
      if (dx < 0 || dy < 0 || dx > 6 || dy > 6) return false;
      const r = Math.max(Math.abs(dx - 3), Math.abs(dy - 3));
      return r !== 2;
    }
    let d = '';
    for (let y = 0; y < n; y++) {
      for (let x = 0; x < n; x++) {
        let on = bit();
        [[0, 0], [n - 7, 0], [0, n - 7]].forEach(f => {
          const v = finder(x, y, f[0], f[1]);
          if (v !== null) on = v;
        });
        if (on) d += `M${x} ${y}h1v1h-1z`;
      }
    }
    document.getElementById('qr').innerHTML =
      `<path d="${d}"/><rect x="12" y="12" width="9" height="9" rx="1" fill="#fff"/>` +
      '<path d="M14 15h5M14 17h4M15 18h4" stroke="#7d6a86" stroke-width=".6"/>';
  </script>
</body>
</html>
```

FILE: styles.css
```css
* { box-sizing: border-box; }
body {
  margin: 0;
  font-family: "Noto Sans", "Noto Sans CJK SC", sans-serif;
  font-size: 12px;
  background: #635350;
  display: flex;
  flex-direction: column;
  height: 100vh;
  overflow: hidden;
}
button, input, select {
  font: inherit;
  color: inherit;
  background: none;
  border: none;
  padding: 0;
  margin: 0;
}
button { display: flex; align-items: center; justify-content: center; white-space: nowrap; }
a { color: inherit; text-decoration: none; white-space: nowrap; }
h1, h2 { font-weight: normal; }
h1, h2, p, ol { margin: 0; padding: 0; }
svg { flex: none; display: block; }
.defs { position: absolute; }
.i { width: 24px; height: 24px; fill: none; stroke: currentColor; }
.solid { fill: currentColor; stroke: none; }
.tri, .chev { width: 8px; height: 8px; }
.b { font-weight: bold; }
.it { font-style: italic; font-family: "Liberation Serif", serif; }
.under { text-decoration: underline; }
.desktop { flex: 1; display: flex; min-height: 0; position: relative; }

/* AutoCAD window */
.cad {
  width: 50.4%;
  margin-top: 5px;
  background: #222831;
  border: 1px solid #3a8fb5;
  color: #b9bec8;
  display: flex;
  flex-direction: column;
}
.cad-head { display: flex; border-bottom: 1px solid #3a414d; }
.cad-logo { width: 26px; height: 30px; margin: 9px 8px 0 11px; }
.cad-rows { flex: 1; }
.cad-title { display: flex; align-items: center; height: 28px; color: #e2e5ea; }
.quick { display: flex; color: #8a8f98; margin-left: 4px; }
h1 { font-size: 12px; margin-left: 47px; width: 82px; white-space: nowrap; }
.play { width: 6px; height: 8px; margin: 0 5px 0 19px; }
.cad-search {
  width: 178px;
  height: 20px;
  background: #414a5e;
  padding: 0 3px;
  font-style: italic;
}
.cad-search::placeholder { color: #b3b9c6; }
.cad-user { display: flex; align-items: center; gap: 1px; }
.cad-user a { color: #fff; }
.cad-tools { display: flex; align-items: center; margin-left: 58px; }
.cad-tools .first { margin-right: 6px; }
.bar { width: 1px; height: 18px; background: #454c58; margin: 0 8px; }
.help {
  width: 16px;
  height: 16px;
  line-height: 16px;
  margin-right: 9px;
  border-radius: 8px;
  text-align: center;
  background: #dfe2e8;
  color: #222831;
  font-weight: bold;
}
.winbtns { display: flex; margin-left: auto; padding-right: 2px; }
.cad-menu { display: flex; align-items: center; gap: 24px; height: 19px; padding-left: 13px; }
.mdi { width: 54px; height: 18px; margin-left: auto; margin-right: 1px; }
.cad-tabs { display: flex; align-items: center; gap: 20px; height: 20px; padding: 2px 0 0 16px; color: #c6cad2; }
.cad-tabs .on {
  background: #0e98d6;
  color: #fff;
  height: 18px;
  line-height: 18px;
  padding: 0 9px;
  margin: 0 -9px;
  border-radius: 2px 2px 0 0;
}
.tabmin { width: 26px; height: 10px; margin-left: 10px; }
.cad-ribbon {
  display: flex;
  height: 99px;
  margin: 0 4px;
  border: 1px solid #3a8fb5;
  background: #3b4453;
  color: #eceef2;
}
.panel { display: flex; flex-direction: column; border-right: 1px solid #262d38; padding-top: 4px; }
.panel-body { flex: 1; display: flex; }
.panel-foot { display: flex; align-items: center; justify-content: center; gap: 7px; height: 18px; margin-top: auto; }
.p-style { width: 144px; }
.p-format { width: 303px; border-right-width: 2px; }
.p-one { width: 61px; border-right-width: 3px; }
.p-find { width: 49px; }
.p-opt { width: 55px; border-right-width: 2px; }
.p-touch { flex: 1; align-items: flex-start; border: none; }
.p-touch .big, .p-touch .panel-foot { width: 39px; }
.big { flex-direction: column; justify-content: flex-start; width: 100%; line-height: 18px; }
.big svg { width: 32px; height: 34px; margin-bottom: 2px; }
.p-find .big svg { width: 34px; }
.p-style .big, .p-format .big { width: 42px; }
.abc { font: bold 15px/15px "Liberation Sans", sans-serif; }
.big .tick { width: 24px; height: 18px; margin-bottom: 3px; }
.stack { display: flex; flex-direction: column; align-items: flex-start; gap: 3px; }
.anno { color: #7cc2ea; width: 16px; height: 16px; margin: 3px 3px 2px; }
.combo { display: flex; align-items: center; position: relative; width: 149px; height: 22px; background: #4a556c; border: 1px solid #2b323e; }
.stack .combo { width: 99px; }
.combo select { appearance: none; flex: 1; height: 20px; padding-left: 3px; }
.combo::after {
  content: "";
  position: absolute;
  right: 2px;
  top: 8px;
  border: 4px solid transparent;
  border-top-color: #e3e6ec;
  border-bottom: none;
}
.combo .ml { padding-left: 10px; }
.combo.off { color: #8990a0; width: 129px; }
.combo select:disabled { opacity: 1; }
.tt { font: 15px "Liberation Serif", serif; padding-left: 3px; }
.tt small { font-size: 13px; }
.swatch { width: 16px; height: 16px; background: #fff; margin-left: 12px; }
.swatch.grey { background: #c3c8d2; border: 1px solid #1d222a; margin-left: 1px; }
.abox { width: 16px; height: 16px; background: #b5dcf5; color: #33506b; margin: 1px 0 0 3px; }
.fmt { display: grid; grid-template-columns: repeat(4, 24px) 13px; grid-auto-rows: 24px; align-items: center; width: 109px; padding-right: 1px; }
.fmt button { height: 24px; margin-left: -2px; }
.serif { font: 18px "Liberation Serif", serif; }
.serif.b { font-weight: bold; }
.serif.it { font-style: italic; }
.serif.under { font-size: 15px; }
.strike { text-decoration: line-through; font-weight: bold; font-size: 16px; }
.over { text-decoration: overline; font-size: 13px; }
.dim { color: #79818f; font-size: 13px; }
.dim sup, .dim sub { font-size: 9px; line-height: 9px; }
.dim sup { margin-bottom: 8px; }
.dim sub { margin-top: 8px; }
.fracbtn { flex-direction: column; font-size: 8px; line-height: 11px; }
.fracbtn span + span { border-top: 1px solid; width: 10px; }
.combos { display: flex; flex-direction: column; gap: 2px; }
.layerrow { display: flex; align-items: center; gap: 2px; }
.layerrow svg { width: 18px; height: 16px; }
.opts { display: flex; flex-direction: column; padding-left: 2px; }
.opts div { display: flex; align-items: center; }
.opts .tri { margin-left: 2px; }
.ruler { width: 24px; height: 22px; background: #49668d; border: 1px solid #7fb1e6; margin-left: 1px; }
.ruler svg { width: 16px; height: 8px; }
.undo { width: 40px; height: 18px; margin: 4px 0 0 5px; color: #717a89; }
.filetabs { display: flex; align-items: flex-end; height: 30px; padding-left: 22px; border-bottom: 4px solid #3b424f; margin: 0 3px; }
.ft { width: 124px; height: 21px; line-height: 21px; padding-left: 10px; background: #2c333e; border-radius: 8px 8px 0 0; }
.ft.on { display: flex; align-items: center; justify-content: space-between; width: 126px; padding-left: 9px; padding-right: 16px; background: #3b424f; color: #fff; }
.ft svg { width: 10px; height: 10px; }
.plus { width: 22px; height: 16px; margin: 0 0 2px 4px; border-radius: 8px; background: #303742; font-size: 18px; color: #dde0e6; }
.canvas {
  flex: 1;
  min-height: 0;
  position: relative;
  overflow: hidden;
  background-color: #212830;
  background-image:
    linear-gradient(#313841, #313841),
    linear-gradient(#313841, #313841),
    linear-gradient(90deg, #262d36 1px, transparent 1px),
    linear-gradient(#262d36 1px, transparent 1px);
  background-size: 1px 100%, 100% 1px, 194px 194px, 194px 194px;
  background-position: 868px 0, 0 187px, 92px 0, 0 187px;
  background-repeat: no-repeat, no-repeat, repeat, repeat;
}
.viewname { padding: 4px 6px; color: #fff; }
.dim-edit { position: absolute; left: 399px; top: 307px; width: 220px; height: 220px; }
.dim-edit text { font: 68px "Liberation Sans", sans-serif; fill: #fff; }
.ucs { position: absolute; left: 0; bottom: 0; width: 100px; height: 90px; }
.cmd { position: absolute; left: 0; bottom: 1px; width: 768px; height: 25px; background: #bdbec0; display: flex; align-items: center; color: #333; }
.cmd input { flex: 1; padding-left: 305px; font: bold 11px "DejaVu Sans Mono", monospace; color: #222; }
.cmd .tri { transform: rotate(180deg); margin-right: 2px; }
.cad-status { display: flex; justify-content: flex-end; gap: 2px; height: 30px; padding: 1px 4px 5px 0; border-top: 1px solid #39404c; color: #e3e6ea; }
.sg { display: flex; align-items: center; height: 24px; background: #343c49; }
.sg button { width: 24px; height: 24px; }
.sg .tri { margin: 0 4px; }
.sg .model { width: 27px; }
.sg .scale { width: 19px; }
.sg .sel { background: #5a8cc0; }

/* Word window */
.word {
  flex: 1;
  min-width: 0;
  margin: 16px 16px 1px 1px;
  background: #e6e6e6;
  border-radius: 7px;
  overflow: hidden;
  display: flex;
  flex-direction: column;
  color: #3b3b3b;
  position: relative;
  box-shadow: 0 0 1px 1px #8a8583;
}
.w-title { display: grid; grid-template-columns: 1fr auto 1fr; align-items: center; height: 35px; background: #2b579a; color: #a9c1e6; }
.w-left { display: flex; align-items: center; padding-left: 20px; }
.switch { display: flex; align-items: center; justify-content: space-between; width: 38px; height: 16px; margin: 0 9px 0 7px; padding: 0 5px 0 3px; border: 1px solid #fff; border-radius: 8px; color: #fff; font-size: 10px; }
.switch input { appearance: none; width: 9px; height: 9px; border-radius: 5px; background: #fff; }
.w-left button + button { margin-left: 6px; }
.w-left .chev + button { margin-left: 6px; }
.more { width: 10px; height: 10px; margin-left: 10px; }
.w-title h2 { display: flex; align-items: center; gap: 6px; font-size: 12px; padding-right: 4px; }
.w-title h2 .tri { width: 6px; }
.w-right { display: flex; align-items: center; justify-content: flex-end; }
.signin { width: 46px; height: 19px; background: #a3b8d9; color: #1f4788; margin: 0 9px 0 16px; border-radius: 2px; }
.wb { width: 47px; height: 35px; }
.w-tabs { display: flex; align-items: flex-start; gap: 27px; height: 30px; padding: 0 13px; font-size: 13px; background: #f2f2f1; }
.w-tabs a { line-height: 28px; }
.w-tabs .on { font-weight: bold; border-bottom: 3px solid #2b579a; height: 28px; }
.share { gap: 5px; width: 59px; height: 23px; margin: 3px 0 0 auto; background: #fff; border: 1px solid #e1e1e1; color: #1f3f77; font-weight: bold; }
.share svg { width: 12px; height: 14px; }
.w-ribbon { display: flex; height: 98px; padding: 3px 0; background: #f2f2f1; position: relative; box-shadow: 0 1px 2px #c4c4c4; }
.grp { display: flex; flex-direction: column; border-right: 1px solid #b6b6b6; }
.g-clip { width: 78px; }
.g-font { width: 278px; }
.g-para { width: 199px; }
.g-style { width: 59px; }
.g-edit { width: 54px; }
.g-youdao { width: 93px; }
.g-body { display: flex; flex: 1; justify-content: center; }
.g-clip .g-body { padding-left: 5px; }
.g-body.rows { flex-direction: column; justify-content: flex-start; padding-left: 8px; }
.g-font .g-body { padding-left: 9px; }
.g-foot { display: flex; align-items: center; justify-content: center; height: 16px; position: relative; }
.g-foot svg { position: absolute; right: 3px; bottom: 0; width: 10px; height: 10px; }
.g-clip .g-foot, .g-style .g-foot { justify-content: flex-start; padding-left: 12px; }
.g-style .g-foot { padding-left: 8px; }
.tall { flex-direction: column; justify-content: flex-start; padding-top: 5px; line-height: 16px; }
.tall svg { width: 32px; height: 31px; }
.g-clip .tall { width: 38px; }
.tall .chev { width: 8px; height: 8px; margin-top: 5px; }
.tall .findbox { background: #fff; border: 1px solid #c8c8c8; margin-top: -4px; margin-bottom: 4px; }
.col { display: flex; flex-direction: column; }
.grey { color: #9a9a9a; }
.r { display: flex; align-items: center; height: 24px; }
.r button { width: 24px; height: 24px; font-size: 14px; }
.r .chev { margin: 0 3px; }
.sep { width: 1px; height: 20px; background: #cfcfcf; margin: 0 4px; }
.r sub, .r sup { font-size: 8px; line-height: 8px; color: #2f7fb0; }
.r sup { margin-bottom: 8px; }
.r sub { margin-top: 8px; }
.wsel { display: flex; align-items: center; height: 23px; background: #fff; border: 1px solid #c6c6c6; margin-right: 2px; color: #222; }
.wsel select { appearance: none; flex: 1; min-width: 0; padding-left: 2px; }
.face { width: 165px; }
.size { width: 47px; }
.wsel .chev { margin: 0 1px; }
.r .wen { flex-direction: column; }
.wen small { font-size: 8px; line-height: 11px; }
.wen small + small { color: #2f7fb0; }
.boxed { width: 16px; height: 16px; line-height: 14px; border: 1px solid #333; font-size: 12px; }
.r .del { text-decoration: line-through; font-size: 13px; }
.r .a16, .r .fx { font-size: 16px; }
.eraser { width: 9px; height: 10px; margin: 6px 0 0 -4px; }
.r .fx { color: #fff; font-weight: bold; -webkit-text-stroke: 1px #2b74b8; }
.r .red { border-bottom: 4px solid #d40f0f; width: 16px; height: 19px; margin: 0 4px; }
.shade { width: 16px; background: #bdbdbd; line-height: 16px; font-size: 12px; }
.ring { width: 16px; height: 16px; line-height: 14px; border: 1px solid #444; border-radius: 8px; font-size: 10px; }
.pressed { display: flex; align-items: center; height: 23px; background: #cdcdcb; outline: 1px solid #9a9a98; outline-offset: -1px; }
.r .az { display: grid; grid-template: 10px 10px / 10px 10px; font-size: 10px; line-height: 10px; align-content: center; }
.az svg { grid-area: 1 / 2 / 3 / 3; width: 8px; height: 18px; }
.az span { grid-column: 1; }
.az span:first-child { color: #2f7fb0; font-weight: bold; }
.collapse { position: absolute; right: 9px; bottom: 9px; }
.collapse svg { width: 12px; height: 8px; }
.w-doc { flex: 1; min-height: 0; overflow: hidden; padding: 18px 19px 0 0; display: flex; justify-content: center; }
.page {
  position: relative;
  width: 792px;
  padding: 101px 0 0 119px;
  background: #fff;
  border: 1px solid #c6c6c6;
  border-bottom: none;
  color: #111;
  font: 300 21px/42px "Noto Sans CJK SC", sans-serif;
  white-space: nowrap;
}
.crop { position: absolute; top: 71px; width: 24px; height: 24px; fill: none; stroke: #b0b0b0; }
.crop.tl { left: 95px; }
.crop.tr { right: 92px; }
.page .pm { display: inline-block; width: 14px; height: 14px; }
.blank { line-height: 26px; }
.page .blank .pm, .figure .pm { width: 10px; height: 10px; }
.page .blank .pm { display: block; margin: 12px 0 3px; }
.hot { color: #c00000; }
.half { font-feature-settings: "halt"; }
ol { list-style: none; }
li { display: flex; }
li b { width: 24px; font-weight: 300; }
.figure { display: flex; align-items: flex-end; font: 12px/16px "DejaVu Serif", "Noto Sans CJK SC", serif; }
.shot { width: 366px; height: 257px; background: #333; padding: 1px 0 0 1px; }
.dlg { height: 100%; background: #f0f0f0; border-radius: 7px; overflow: hidden; }
.dlg-title { display: flex; align-items: center; height: 29px; padding: 0 9px; background: #fbefed; font-family: "Noto Sans CJK SC", sans-serif; }
.dlg-title svg { width: 13px; height: 14px; margin-right: 7px; }
.dlg-title .x { width: 11px; height: 11px; margin: 0 0 0 auto; }
.dlg-body { position: relative; }
.xy { position: absolute; left: 17px; top: 10px; width: 32px; height: 34px; }
.ask { padding-left: 62px; line-height: 37px; }
.dr { display: flex; align-items: center; height: 16px; }
.dlg input { appearance: none; width: 13px; height: 13px; border: 1px solid #666; border-radius: 3px; background: #fff; margin-right: 3px; }
.dlg input[type=checkbox]:checked { background: #0b5cad; border-color: #0b5cad; }
.dlg input[type=checkbox]:checked::after { content: ""; display: block; width: 6px; height: 3px; margin: 3px 0 0 2px; border: solid #fff; border-width: 0 0 1px 1px; transform: rotate(-45deg); }
.dlg input[type=radio] { border-radius: 7px; margin-right: 21px; }
.dlg input[type=radio]:checked { border: 4px solid #0b5cad; }
.d1 { padding-left: 62px; height: 26px; }
.d2 { padding-left: 78px; height: 12px; margin-bottom: 6px; }
.d3 { padding-left: 92px; }
.d3 label { margin-left: 8px; }
.frac { width: 12px; height: 16px; }
.d4, .d5 { height: 22px; padding-left: 78px; }
.d3 + .d4 { margin-top: 6px; }
.d4 span:first-child { width: 140px; }
.btns { display: flex; gap: 39px; padding: 13px 0 0 97px; }
.btns button { width: 74px; height: 19px; background: #fdfdfd; border: 1px solid #ccc; border-radius: 3px; }
.btns .ok { border-color: #0b6aa8; }
.w-status { display: flex; align-items: center; gap: 20px; height: 23px; padding-left: 5px; background: #f2f2f1; border-top: 1px solid #c9c9c7; white-space: nowrap; color: #505050; }
.book { width: 16px; height: 14px; }
.w-views { display: flex; align-items: center; margin-left: auto; height: 21px; padding-right: 20px; }
.w-views svg { width: 16px; height: 16px; }
.focus { gap: 2px; margin-right: 12px; }
.view { width: 40px; height: 21px; }
.view.on { background: #cfcfcd; }
.zb { width: 16px; font-size: 16px; line-height: 16px; }
.w-views input { appearance: none; width: 100px; height: 1px; background: #999; margin: 0 1px; }
.w-views input::-webkit-slider-thumb { appearance: none; width: 5px; height: 11px; background: #777; }
.pct { margin-left: 10px; width: 32px; }

/* spreadsheet showing at the right edge */
.sheet { position: absolute; right: 0; top: 350px; bottom: 0; width: 16px; padding-top: 11px; z-index: -1; background: linear-gradient(90deg, #d5d9da 5px, #a9b1b2 5px, #e3eeee 6px, #edf6f6); overflow: hidden; }
.sheet li { height: 23px; border-bottom: 1px solid #bcc4c4; font: 11px/22px "Liberation Serif", serif; color: #555; }

/* taskbar */
.taskbar { display: flex; align-items: center; justify-content: space-between; height: 48px; padding: 0 20px 0 289px; background: linear-gradient(90deg, #efe0dd, #ebdcdb 60%, #eddfda); border-top: 1px solid #b9abaa; }
.apps { display: flex; gap: 6px; }
.app { width: 38px; height: 38px; border-radius: 4px; position: relative; }
.peek { width: 20px; height: 22px; margin: 8px 7px 0 0; border-radius: 4px; background: #e0447c; }
.app svg { width: 24px; height: 24px; }
.app .sm { width: 18px; height: 20px; }
.app.active { background: #f9efed; }
.app.run::after { content: ""; position: absolute; left: 16px; bottom: 0; width: 6px; height: 3px; border-radius: 2px; background: #8b8080; }
.app.active::after { left: 11px; width: 16px; background: #1b6db5; }
.sw { font: bold 11px "Liberation Sans", sans-serif; fill: #fff; }
.app svg { overflow: visible; }
.yr { font: bold 8px "Liberation Sans", sans-serif; fill: #000; stroke: #fff; stroke-width: 2px; paint-order: stroke; }
.tray { display: flex; align-items: center; color: #2a2222; }
.tr { width: 32px; }
.tr:nth-child(4) { width: 30px; }
.tr:nth-child(5) { width: 24px; }
.mic { color: #2c5aa5; }
.ime { font-size: 15px; color: #6d6464; }
.clock { display: flex; flex-direction: column; align-items: flex-end; line-height: 16px; width: 75px; margin-left: 1px; }
.bell { width: 16px; height: 18px; margin-left: 7px; }

/* WeChat card over the lower left corner */
.wx-card { position: fixed; left: 0; bottom: 0; display: flex; gap: 38px; width: 307px; height: 112px; padding: 21px 18px 0 21px; background: #fff; border-radius: 6px; }
#qr { width: 67px; height: 67px; }
.wx-side { flex: 1; margin-top: -6px; }
.wx-name { display: flex; align-items: center; gap: 7px; height: 36px; font-size: 24px; font-weight: 300; color: #333; white-space: nowrap; }
.wx-name svg { width: 36px; height: 30px; }
.wx-search { justify-content: flex-start; gap: 8px; width: 163px; height: 35px; margin-top: 8px; padding-left: 9px; background: #09c261; border-radius: 3px; color: #fff; font-size: 16px; }
.wx-search svg { width: 18px; height: 18px; fill: none; stroke: #fff; stroke-width: 2; }
```
